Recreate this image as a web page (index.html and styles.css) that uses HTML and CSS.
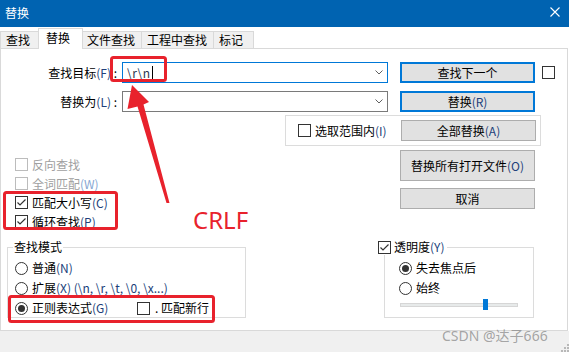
FILE: index.html
```html
<!DOCTYPE html>
<html lang="zh-CN">
<head>
    <meta charset="UTF-8">
    <meta name="viewport" content="width=device-width, initial-scale=1.0">
    <title>替换</title>
    <link rel="stylesheet" href="styles.css">
</head>
<body>
    <div class="dialog">
        <header class="titlebar">
            <span class="title">替换</span>
            <svg class="close" width="10" height="10" viewBox="0 0 10 10"><path d="M0.5 0.5 L9.5 9.5 M9.5 0.5 L0.5 9.5" stroke="#fff" stroke-width="1.1" fill="none"/></svg>
        </header>

        <nav class="tabs">
            <div class="tab">查找</div>
            <div class="tab is-active">替换</div>
            <div class="tab">文件查找</div>
            <div class="tab">工程中查找</div>
            <div class="tab">标记</div>
        </nav>

        <main class="panel">
            <div class="row">
                <label class="field-label">查找目标<span class="hk">(F)</span> :</label>
                <div class="combo is-focused">
                    <span class="combo-text">\r\n</span><span class="caret"></span>
                    <svg class="chevron" width="8" height="5" viewBox="0 0 8 5"><path d="M0.5 0.5 L4 4 L7.5 0.5" stroke="#606060" fill="none"/></svg>
                </div>
                <button class="btn is-default">查找下一个</button>
                <span class="check side-check"></span>
            </div>

            <div class="row row-replace">
                <label class="field-label">替换为<span class="hk">(L)</span> :</label>
                <div class="combo">
                    <svg class="chevron" width="8" height="5" viewBox="0 0 8 5"><path d="M0.5 0.5 L4 4 L7.5 0.5" stroke="#606060" fill="none"/></svg>
                </div>
                <button class="btn is-default">替换<span class="hk">(R)</span></button>
            </div>

            <div class="selection-box">
                <label class="opt"><span class="check"></span><span>选取范围内<span class="hk">(I)</span></span></label>
                <button class="btn">全部替换<span class="hk">(A)</span></button>
            </div>

            <div class="lower">
                <div class="left-col">
                    <div class="options">
                        <label class="opt is-disabled"><span class="check"></span><span>反向查找</span></label>
                        <label class="opt is-disabled"><span class="check"></span><span>全词匹配<span class="hk">(W)</span></span></label>
                        <label class="opt"><span class="check"><svg width="11" height="11" viewBox="0 0 11 11"><path d="M1.5 5.5 L4 8 L9.5 2.5" stroke="#333" stroke-width="1.2" fill="none"/></svg></span><span>匹配大小写<span class="hk">(C)</span></span></label>
                        <label class="opt"><span class="check"><svg width="11" height="11" viewBox="0 0 11 11"><path d="M1.5 5.5 L4 8 L9.5 2.5" stroke="#333" stroke-width="1.2" fill="none"/></svg></span><span>循环查找<span class="hk">(P)</span></span></label>
                    </div>

                    <fieldset class="group mode-group">
                        <legend>查找模式</legend>
                        <label class="opt radio-row"><span class="radio"></span><span>普通<span class="hk">(N)</span></span></label>
                        <label class="opt radio-row"><span class="radio"></span><span>扩展<span class="hk">(X) (\n, \r, \t, \0, \x...)</span></span></label>
                        <div class="radio-row">
                            <label class="opt regex-opt"><span class="radio is-on"></span><span>正则表达式<span class="hk">(G)</span></span></label>
                            <label class="opt newline-opt"><span class="check"></span><span>. 匹配新行</span></label>
                        </div>
                    </fieldset>
                </div>

                <div class="right-col">
                    <button class="btn btn-tall">替换所有打开文件<span class="hk">(O)</span></button>
                    <button class="btn btn-cancel">取消</button>

                    <fieldset class="group opacity-group">
                        <legend class="opt"><span class="check"><svg width="11" height="11" viewBox="0 0 11 11"><path d="M1.5 5.5 L4 8 L9.5 2.5" stroke="#333" stroke-width="1.2" fill="none"/></svg></span><span>透明度<span class="hk">(Y)</span></span></legend>
                        <label class="opt radio-row"><span class="radio is-on"></span><span>失去焦点后</span></label>
                        <label class="opt radio-row"><span class="radio"></span><span>始终</span></label>
                        <div class="slider"><span class="thumb" style="left: 82px"></span></div>
                    </fieldset>
                </div>
            </div>
        </main>

        <footer class="footer">
            <svg class="grip" width="9" height="9" viewBox="0 0 9 9">
                <g fill="#b8b8b8">
                    <rect x="7" y="1" width="2" height="2"/>
                    <rect x="4" y="4" width="2" height="2"/><rect x="7" y="4" width="2" height="2"/>
                    <rect x="1" y="7" width="2" height="2"/><rect x="4" y="7" width="2" height="2"/><rect x="7" y="7" width="2" height="2"/>
                </g>
            </svg>
        </footer>

        <!-- annotations drawn over the screenshot -->
        <svg class="marks" width="569" height="352" viewBox="0 0 569 352">
            <g fill="none" stroke="#e8222c" stroke-width="3">
                <rect x="111.5" y="57.5" width="54" height="23" rx="2"/>
                <rect x="4.5" y="192.5" width="112" height="36" rx="2"/>
                <rect x="9.5" y="296.5" width="204" height="25" rx="2"/>
            </g>
            <polygon fill="#e8222c" points="132,85 149,102 143.5,104.5 169.5,203 166.5,203 137.5,106.5 127.5,109"/>
        </svg>
        <div class="crlf">CRLF</div>
        <div class="watermark">CSDN @达子666</div>
    </div>
</body>
</html>
```

FILE: styles.css
```css
* {
    margin: 0;
    padding: 0;
    box-sizing: border-box;
}

:root {
    --accent: #0078d7;
    --frame: #dcdcdc;
    --red: #e8222c;
}

body {
    width: 569px;
    height: 352px;
    overflow: hidden;
    font-family: "Noto Sans CJK SC", "Noto Sans", sans-serif;
    font-size: 12px;
    color: #000;
    background: #fff;
}

.dialog {
    position: relative;
    width: 569px;
    height: 352px;
    background: #fff;
}

.titlebar {
    height: 27px;
    background: #0063b1;
    color: #fff;
    display: flex;
    align-items: center;
    justify-content: space-between;
    padding: 0 9px 0 5px;
}

.title {
    line-height: 16px;
    margin-top: -2px;
}

.close {
    display: block;
    margin-top: -3px;
}

/* tabs */
.tabs {
    display: flex;
    align-items: flex-end;
    height: 21px;
}

.tab {
    height: 17px;
    min-width: 41px;
    padding: 0 6px 0 5px;
    margin-right: -1px;
    border: 1px solid #d9d9d9;
    border-bottom: none;
    background: #f0f0f0;
    line-height: 16px;
}

.tab.is-active {
    position: relative;
    z-index: 1;
    height: 21px;
    min-width: 45px;
    padding: 1px 7px 0;
    margin: 0 -2px -1px -2px;
    background: #fff;
}

/* main panel */
.panel {
    width: 568px;
    height: 283px;
    border: 1px solid #d9d9d9;
    padding-top: 13px;
}

.row {
    display: flex;
    align-items: center;
    height: 21px;
}

.row-replace {
    margin-top: 8px;
}

.field-label {
    width: 116px;
    text-align: right;
    line-height: 16px;
}

.hk {
    color: #213f7a;
}

.is-disabled {
    color: #a0a0a0;
}

.is-disabled .hk {
    color: #86a6d2;
}

.combo {
    display: flex;
    align-items: center;
    width: 266px;
    height: 21px;
    margin-left: 5px;
    padding-left: 4px;
    border: 1px solid #7a7a7a;
    background: #fff;
}

.combo.is-focused {
    border-color: var(--accent);
}

.combo-text {
    line-height: 16px;
    letter-spacing: 0.5px;
    color: #2b3550;
}

.caret {
    width: 1px;
    height: 14px;
    margin-left: 1px;
    background: #000;
}

.chevron {
    display: block;
    margin-left: auto;
    margin-right: 4px;
}

.btn {
    display: flex;
    align-items: center;
    justify-content: center;
    width: 135px;
    height: 21px;
    margin-left: 12px;
    border: 1px solid #adadad;
    background: #e1e1e1;
    font: inherit;
    color: #000;
    line-height: 16px;
}

.btn.is-default {
    border: 2px solid var(--accent);
}

.side-check {
    margin-left: 7px;
}

/* check boxes and radios */
.opt {
    display: flex;
    align-items: center;
    gap: 4px;
    line-height: 16px;
}

.check {
    display: flex;
    align-items: center;
    justify-content: center;
    flex: none;
    width: 13px;
    height: 13px;
    border: 1px solid #333;
    background: #fff;
}

.is-disabled .check {
    border-color: #bcbcbc;
}

.radio {
    display: flex;
    align-items: center;
    justify-content: center;
    flex: none;
    width: 13px;
    height: 13px;
    border: 1px solid #333;
    border-radius: 50%;
    background: #fff;
}

.radio.is-on::after {
    content: "";
    width: 7px;
    height: 7px;
    border-radius: 50%;
    background: #333;
}

.selection-box {
    display: flex;
    align-items: center;
    width: 256px;
    height: 31px;
    margin: 3px 0 0 284px;
    padding: 0 4px 0 12px;
    border: 1px solid var(--frame);
}

.selection-box .btn {
    margin-left: auto;
}

/* lower half */
.lower {
    display: flex;
}

.left-col {
    width: 377px;
}

.options {
    padding-top: 9px;
}

.options .opt {
    height: 19px;
    padding-left: 14px;
}

.group {
    border: 1px solid var(--frame);
    min-width: 0;
}

.group legend {
    line-height: 16px;
    padding: 0 1px;
}

.mode-group {
    width: 239px;
    height: 79px;
    margin: 8px 0 0 6px;
    padding: 3px 0 0 7px;
}

.mode-group legend {
    margin-left: -2px;
}

.radio-row {
    display: flex;
    align-items: center;
    height: 20px;
}

.regex-opt {
    width: 122px;
}

.newline-opt {
    gap: 5px;
}

.right-col {
    display: flex;
    flex-direction: column;
}

.btn-tall {
    height: 31px;
    margin: 4px 0 0 22px;
}

.btn-cancel {
    margin: 7px 0 0 22px;
}

.opacity-group {
    width: 150px;
    height: 79px;
    margin: 30px 0 0 6px;
    padding: 3px 0 0 14px;
}

.opacity-group legend {
    display: flex;
    gap: 3px;
    margin-left: -21px;
    padding: 0 2px 0 0;
    background: #fff;
}

.slider {
    position: relative;
    width: 118px;
    height: 4px;
    margin: 5px 0 0 1px;
    border: 1px solid #d6d6d6;
    background: #e7eaea;
}

.thumb {
    position: absolute;
    top: -5px;
    width: 5px;
    height: 11px;
    background: var(--accent);
}

.footer {
    display: flex;
    justify-content: flex-end;
    align-items: flex-end;
    height: 21px;
    background: #f0f0f0;
}

.grip {
    display: block;
}

/* overlays */
.marks {
    position: absolute;
    top: 0;
    left: 0;
    pointer-events: none;
}

.crlf {
    position: absolute;
    left: 193px;
    top: 208px;
    font-family: "Noto Sans", sans-serif;
    font-size: 24px;
    line-height: 24px;
    color: var(--red);
}

.watermark {
    position: absolute;
    left: 442px;
    top: 327px;
    font-family: "Noto Sans", "Noto Sans CJK SC", sans-serif;
    font-size: 14px;
    line-height: 18px;
    color: rgba(120, 120, 120, 0.65);
}
```
